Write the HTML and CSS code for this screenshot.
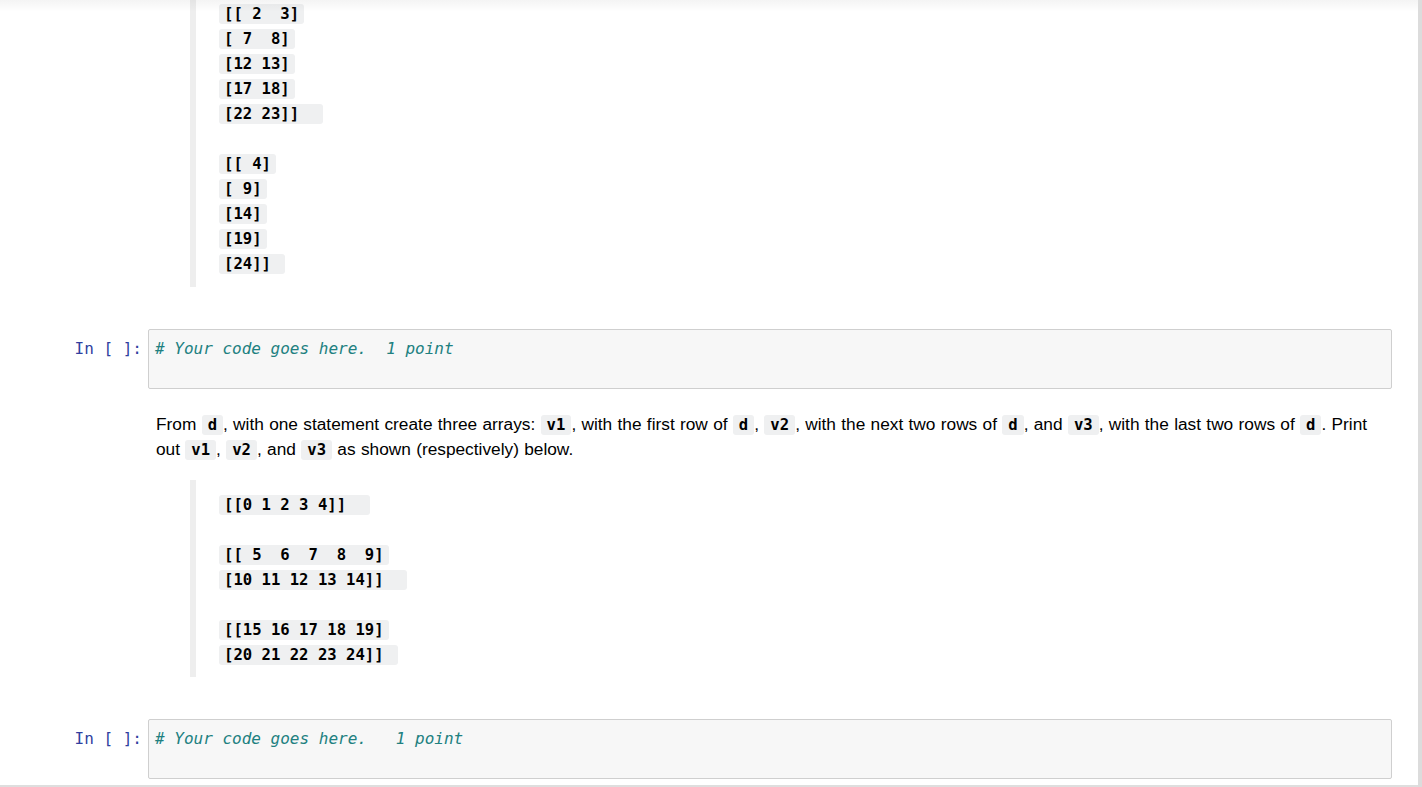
FILE: index.html
```html
<!DOCTYPE html>
<html>
<head>
<meta charset="utf-8">
<link rel="stylesheet" href="styles.css">
</head>
<body>
<div class="page">
  <div class="viewport">
    <div class="top-shadow"></div>
    <div class="notebook">
      <div class="cell">
        <div class="prompt"></div>
        <div class="md-body">
          <blockquote class="bq bq-top">
            <div class="cl"><code>[[ 2  3]</code></div>
            <div class="cl"><code>[ 7  8]</code></div>
            <div class="cl"><code>[12 13]</code></div>
            <div class="cl"><code>[17 18]</code></div>
            <div class="cl"><code>[22 23]]  </code></div>
            <div class="cl"></div>
            <div class="cl"><code>[[ 4]</code></div>
            <div class="cl"><code>[ 9]</code></div>
            <div class="cl"><code>[14]</code></div>
            <div class="cl"><code>[19]</code></div>
            <div class="cl"><code>[24]] </code></div>
          </blockquote>
        </div>
      </div>

      <div class="cell">
        <div class="prompt in">In&nbsp;[&nbsp;]:</div>
        <div class="input"><pre class="src"><span class="cm"># Your code goes here.  1 point</span>
</pre></div>
      </div>

      <div class="cell">
        <div class="prompt"></div>
        <div class="md-body md-text">
          <p class="para">From <code>d</code>, with one statement create three arrays: <code>v1</code>, with the first row of <code>d</code>, <code>v2</code>, with the next two rows of <code>d</code>, and <code>v3</code>, with the last two rows of <code>d</code>. Print out <code>v1</code>, <code>v2</code>, and <code>v3</code> as shown (respectively) below.</p>
          <blockquote class="bq">
            <div class="cl"><code>[[0 1 2 3 4]]  </code></div>
            <div class="cl"></div>
            <div class="cl"><code>[[ 5  6  7  8  9]</code></div>
            <div class="cl"><code>[10 11 12 13 14]]  </code></div>
            <div class="cl"></div>
            <div class="cl"><code>[[15 16 17 18 19]</code></div>
            <div class="cl"><code>[20 21 22 23 24]] </code></div>
          </blockquote>
        </div>
      </div>

      <div class="cell">
        <div class="prompt in">In&nbsp;[&nbsp;]:</div>
        <div class="input"><pre class="src"><span class="cm"># Your code goes here.   1 point</span>
</pre></div>
      </div>
    </div>
  </div>
  <div class="scrollbar"></div>
</div>
</body>
</html>
```

FILE: styles.css
```css
html, body {
  margin: 0;
  padding: 0;
  background: #ffffff;
}

.page {
  display: flex;
  width: 1422px;
  height: 787px;
  overflow: hidden;
}

.viewport {
  position: relative;
  width: 1418px;
  height: 785px;
  border-bottom: 2px solid #dedede;
  overflow: hidden;
  background: #ffffff;
}

.scrollbar {
  width: 4px;
  height: 787px;
  background: #dcdcdc;
}

.top-shadow {
  position: absolute;
  left: 0;
  top: 0;
  width: 100%;
  height: 12px;
  background: linear-gradient(to bottom, rgba(0, 0, 0, 0.045), rgba(0, 0, 0, 0));
  pointer-events: none;
}

.notebook {
  width: 1392px;
  display: flex;
  flex-direction: column;
}

.cell {
  display: flex;
  align-items: flex-start;
}

.prompt {
  flex: 0 0 148px;
  box-sizing: border-box;
  padding: 9px 6px 0 0;
  text-align: right;
  font-family: "DejaVu Sans Mono", monospace;
  font-size: 16px;
  line-height: 21px;
  color: #303f9f;
  white-space: nowrap;
}

.md-body {
  flex: 1 1 auto;
  min-width: 0;
  padding: 0 8px;
  font-family: "Liberation Sans", Arial, sans-serif;
  font-size: 17.3px;
  color: #000000;
}

.md-text {
  padding-right: 14px;
}

.bq {
  margin: 0 0 42px 34px;
  padding: 12px 20px 10px 23px;
  border-left: 6px solid #eeeeee;
}

.bq-top {
  padding-top: 1px;
  padding-bottom: 11px;
}

.cl {
  height: 25px;
  line-height: 25px;
  white-space: nowrap;
}

code {
  font-family: "DejaVu Sans Mono", monospace;
  font-weight: bold;
  font-size: 15.6px;
  background: #eff0f1;
  border-radius: 3px;
  padding: 1px 5px;
  white-space: pre;
  color: #000000;
}

.para {
  margin: 23px 0 18px 0;
  line-height: 25px;
  word-spacing: 0.5px;
}

.para code {
  padding: 1px 6px;
  line-height: 1;
  word-spacing: 0;
}

.input {
  flex: 1 1 auto;
  min-width: 0;
  box-sizing: border-box;
  height: 60px;
  border: 1px solid #cfcfcf;
  border-radius: 2px;
  background: #f7f7f7;
  padding: 8px 6px;
}

.src {
  margin: 0;
  font-family: "DejaVu Sans Mono", monospace;
  font-size: 16px;
  line-height: 21px;
  white-space: pre;
}

.cm {
  color: #208080;
  font-style: italic;
}
```
